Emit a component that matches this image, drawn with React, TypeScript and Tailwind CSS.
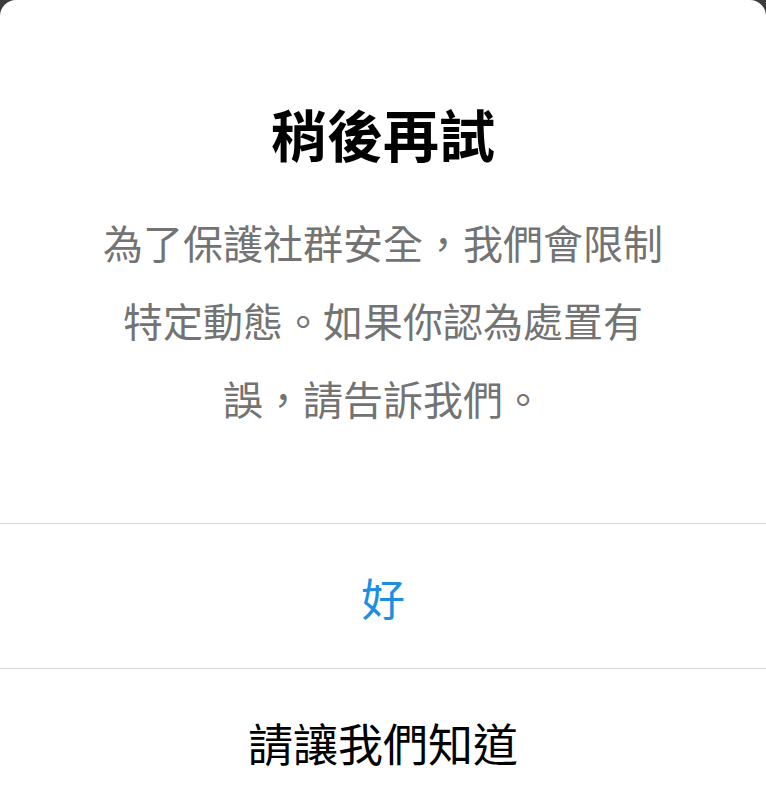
import React from 'react';

const font = { fontFamily: '"Noto Sans CJK TC", "Noto Sans", sans-serif' };

export default function App() {
    return (
        <div className="w-[766px] h-[791px] bg-[#3c3c3c] overflow-hidden" style={font}>
            <div className="w-full h-full bg-white rounded-t-[16px] flex flex-col">
                <div className="pt-[99px] pb-[86px] px-[100px] flex flex-col items-center text-center">
                    <h1 className="text-[56px] leading-[67px] font-bold text-black">稍後再試</h1>
                    <p className="mt-[37px] text-[40px] leading-[78px] text-[#737373]">
                        為了保護社群安全，我們會限制特定動態。如果你認為處置有誤，請告訴我們。
                    </p>
                </div>
                <div className="border-t border-[#dbdbdb]">
                    <button className="w-full h-[144px] flex items-center justify-center pt-[2px] text-[44px] text-[#1e8fe0]">
                        好
                    </button>
                </div>
                <div className="border-t border-[#dbdbdb]">
                    <button className="w-full h-[154px] flex items-center justify-center pb-[6px] text-[45px] text-black">
                        請讓我們知道
                    </button>
                </div>
            </div>
        </div>
    );
}
